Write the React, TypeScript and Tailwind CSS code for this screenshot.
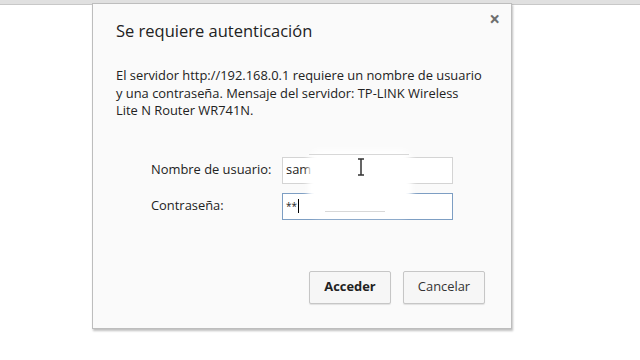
export default function App() {
  return (
    <div className="relative h-[360px] w-[640px] overflow-hidden bg-white font-['Open_Sans',sans-serif] text-[#222]">
      <div className="h-[5px] w-full border-b border-[#c8c8c8] bg-[#e0e0e0]" />

      <div className="absolute left-[92px] top-[3px] h-[326px] w-[420px] border border-[#bdbdbd] bg-[#fafafa] shadow-[1px_2px_2px_rgba(0,0,0,0.25)]">
        <button type="button" className="absolute right-[11px] top-[6px] text-[19px] font-bold leading-none text-[#6f6f6f]">
          ×
        </button>

        <h1 className="pl-[23px] pt-[16px] text-[16.5px] leading-[22px] text-[#222]">
          Se requiere autenticación
        </h1>

        <p className="mt-[25px] whitespace-nowrap pl-[23px] text-[12.9px] leading-[17.5px]">
          El servidor http://192.168.0.1 requiere un nombre de usuario
          <br />
          y una contraseña. Mensaje del servidor: TP-LINK Wireless
          <br />
          Lite N Router WR741N.
        </p>

        <div className="mt-[37px] flex flex-col gap-[9px] pl-[58px] text-[12.9px]">
          <div className="flex items-center">
            <span className="w-[131px]">Nombre de usuario:</span>
            <div className="flex h-[27px] w-[171px] items-center border border-[#d4d4d4] bg-white pl-[3px]">
              sam
            </div>
          </div>
          <div className="flex items-center">
            <span className="w-[131px]">Contraseña:</span>
            <div className="flex h-[27px] w-[171px] items-center border border-[#7d9ec3] bg-white pl-[3px]">
              <span className="text-[10px] leading-none">**</span>
              <span className="ml-px h-[14px] w-px bg-black" />
            </div>
          </div>
        </div>

        <div className="mt-[51px] flex justify-end gap-[12px] pr-[26px] text-[12.9px]">
          <button type="button" className="h-[33px] w-[82px] rounded-[2px] border border-[#c6c6c6] bg-[#f6f6f6] font-bold shadow-[0_1px_1px_rgba(0,0,0,0.1)]">
            Acceder
          </button>
          <button type="button" className="h-[33px] w-[82px] rounded-[2px] border border-[#c6c6c6] bg-[#f6f6f6] text-[#333] shadow-[0_1px_1px_rgba(0,0,0,0.1)]">
            Cancelar
          </button>
        </div>

        {/* blurred overlay left by the cursor in the capture */}
        <div className="absolute left-[221px] top-[152px] h-[54px] w-[92px] rounded-[6px] bg-white shadow-[0_0_6px_6px_white]" />
        <div className="absolute left-[216px] top-[150px] h-px w-[100px] bg-[#d8d8d8]" />
        <div className="absolute left-[232px] top-[207px] h-px w-[60px] bg-[#d8d8d8]" />
        <svg className="absolute left-[263px] top-[154px]" width="10" height="18" viewBox="0 0 10 18">
          <path d="M2 1h6M5 1v16M2 17h6" stroke="#333" strokeWidth="1.5" fill="none" />
        </svg>
      </div>
    </div>
  );
}
